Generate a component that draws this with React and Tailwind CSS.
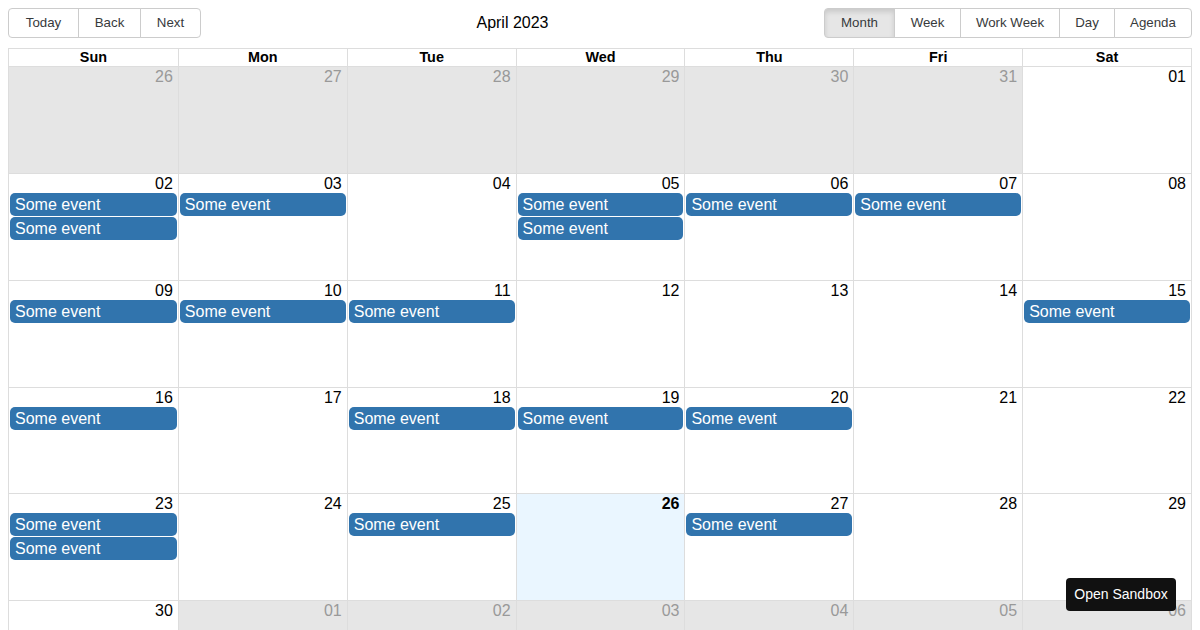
import React from "react";

const weeks = [
  [["26", 0, "off"], ["27", 0, "off"], ["28", 0, "off"], ["29", 0, "off"], ["30", 0, "off"], ["31", 0, "off"], ["01", 0]],
  [["02", 2], ["03", 1], ["04", 0], ["05", 2], ["06", 1], ["07", 1], ["08", 0]],
  [["09", 1], ["10", 1], ["11", 1], ["12", 0], ["13", 0], ["14", 0], ["15", 1]],
  [["16", 1], ["17", 0], ["18", 1], ["19", 1], ["20", 1], ["21", 0], ["22", 0]],
  [["23", 2], ["24", 0], ["25", 1], ["26", 0, "today"], ["27", 1], ["28", 0], ["29", 0]],
  [["30", 0], ["01", 0, "off"], ["02", 0, "off"], ["03", 0, "off"], ["04", 0, "off"], ["05", 0, "off"], ["06", 0, "off"]],
];

const rowHeights = ["h-[106px]", "h-[107px]", "h-[107px]", "h-[106px]", "h-[107px]", "h-[107px]"];

const days = ["Sun", "Mon", "Tue", "Wed", "Thu", "Fri", "Sat"];

function Btn({ children, first, last, active, w }) {
  return (
    <button
      className={
        "h-[30px] text-[13.3px] text-[#373a3c] border border-[#ccc] text-center " +
        w +
        " " +
        (first ? "rounded-l-[4px] " : "-ml-px ") +
        (last ? "rounded-r-[4px] " : "") +
        (active
          ? "bg-[#e6e6e6] border-[#adadad] shadow-[inset_0_3px_5px_rgba(0,0,0,0.125)] relative"
          : "bg-white")
      }
    >
      {children}
    </button>
  );
}

export default function App() {
  return (
    <div
      className="p-2 bg-white text-black h-[630px] overflow-hidden"
      style={{ fontFamily: '"Liberation Sans", Arial, sans-serif' }}
    >
      <div className="flex items-center mb-[10px]">
        <div className="flex">
          <Btn first w="w-[71px]">Today</Btn>
          <Btn w="w-[63px]">Back</Btn>
          <Btn last w="w-[61px]">Next</Btn>
        </div>
        <div className="flex-1 text-center text-[16px]">April 2023</div>
        <div className="flex">
          <Btn first active w="w-[71px]">Month</Btn>
          <Btn w="w-[67px]">Week</Btn>
          <Btn w="w-[100px]">Work Week</Btn>
          <Btn w="w-[56px]">Day</Btn>
          <Btn last w="w-[78px]">Agenda</Btn>
        </div>
      </div>

      <div className="border border-[#ddd]">
        <div className="grid grid-cols-7 border-b border-[#ddd]">
          {days.map((d, i) => (
            <div
              key={d}
              className={
                "h-[17px] leading-[17px] text-center font-bold text-[14.4px] " +
                (i > 0 ? "border-l border-[#ddd]" : "")
              }
            >
              {d}
            </div>
          ))}
        </div>
        {weeks.map((week, wi) => (
          <div
            key={wi}
            className={
              "grid grid-cols-7 " + rowHeights[wi] + " " + (wi > 0 ? "border-t border-[#ddd]" : "")
            }
          >
            {week.map(([num, count, kind], ci) => (
              <div
                key={ci}
                className={
                  "flex flex-col " +
                  (ci > 0 ? "border-l border-[#ddd] " : "") +
                  (kind === "off" ? "bg-[#e6e6e6] " : kind === "today" ? "bg-[#eaf6ff] " : "bg-white ")
                }
              >
                <div
                  className={
                    "h-[19px] leading-[19px] text-right pr-[5px] text-[16px] " +
                    (kind === "off" ? "text-[#999] " : "") +
                    (kind === "today" ? "font-bold" : "")
                  }
                >
                  {num}
                </div>
                {Array.from({ length: count }).map((_, k) => (
                  <div
                    key={k}
                    className="mx-px mb-px h-[23px] leading-[23px] px-[5px] rounded-[5px] bg-[#3174ad] text-white text-[16px] whitespace-nowrap overflow-hidden"
                  >
                    Some event
                  </div>
                ))}
              </div>
            ))}
          </div>
        ))}
      </div>

      <button className="fixed right-[24px] bottom-[19px] w-[110px] h-[33px] rounded-[4px] bg-[#111] text-white text-[14px]">
        Open Sandbox
      </button>
    </div>
  );
}
